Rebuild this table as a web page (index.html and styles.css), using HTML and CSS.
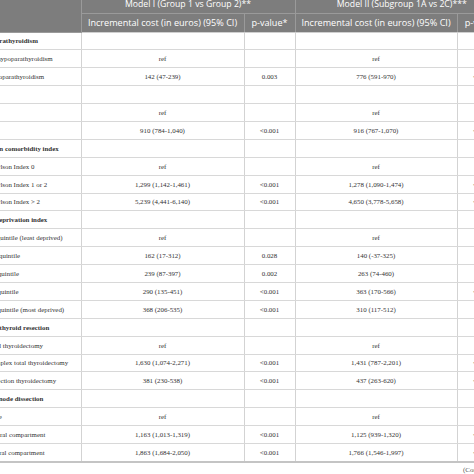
FILE: index.html
```html
<!DOCTYPE html>
<html>
<head>
<meta charset="utf-8">
<link rel="stylesheet" href="styles.css">
</head>
<body>
<div class="viewport">
  <table class="cost">
    <colgroup>
      <col class="c-label">
      <col class="c-cost">
      <col class="c-p">
      <col class="c-cost2">
      <col class="c-p">
    </colgroup>
    <thead>
      <tr class="h1">
        <th rowspan="2"></th>
        <th colspan="2">Model I (Group 1 vs Group 2)**</th>
        <th colspan="2">Model II (Subgroup 1A vs 2C)***</th>
      </tr>
      <tr class="h2">
        <th>Incremental cost (in euros) (95% CI)</th>
        <th>p-value*</th>
        <th>Incremental cost (in euros) (95% CI)</th>
        <th>p-value*</th>
      </tr>
    </thead>
    <tbody>
      <tr class="grp"><td>Hypoparathyroidism</td><td></td><td></td><td></td><td></td></tr>
      <tr><td>No hypoparathyroidism</td><td>ref</td><td></td><td>ref</td><td></td></tr>
      <tr><td>Hypoparathyroidism</td><td>142 (47-239)</td><td>0.003</td><td>776 (591-970)</td><td>&lt;0.001</td></tr>
      <tr class="grp"><td>Sex</td><td></td><td></td><td></td><td></td></tr>
      <tr><td>Mr</td><td>ref</td><td></td><td>ref</td><td></td></tr>
      <tr><td>Ms</td><td>910 (784-1,040)</td><td>&lt;0.001</td><td>916 (767-1,070)</td><td>&lt;0.001</td></tr>
      <tr class="grp"><td>Charlson comorbidity index</td><td></td><td></td><td></td><td></td></tr>
      <tr><td>Charlson Index 0</td><td>ref</td><td></td><td>ref</td><td></td></tr>
      <tr><td>Charlson Index 1 or 2</td><td>1,299 (1,142-1,461)</td><td>&lt;0.001</td><td>1,278 (1,090-1,474)</td><td>&lt;0.001</td></tr>
      <tr><td>Charlson Index &gt; 2</td><td>5,239 (4,441-6,140)</td><td>&lt;0.001</td><td>4,650 (3,778-5,658)</td><td>&lt;0.001</td></tr>
      <tr class="grp"><td>Social deprivation index</td><td></td><td></td><td></td><td></td></tr>
      <tr><td>1st quintile (least deprived)</td><td>ref</td><td></td><td>ref</td><td></td></tr>
      <tr><td>2nd quintile</td><td>162 (17-312)</td><td>0.028</td><td>140 (-37-325)</td><td>0.069</td></tr>
      <tr><td>3rd quintile</td><td>239 (87-397)</td><td>0.002</td><td>263 (74-460)</td><td>0.007</td></tr>
      <tr><td>4th quintile</td><td>290 (135-451)</td><td>&lt;0.001</td><td>363 (170-566)</td><td>&lt;0.001</td></tr>
      <tr><td>5th quintile (most deprived)</td><td>368 (206-535)</td><td>&lt;0.001</td><td>310 (117-512)</td><td>0.001</td></tr>
      <tr class="grp"><td>Type of thyroid resection</td><td></td><td></td><td></td><td></td></tr>
      <tr><td>Total thyroidectomy</td><td>ref</td><td></td><td>ref</td><td></td></tr>
      <tr><td>Complex total thyroidectomy</td><td>1,630 (1,074-2,271)</td><td>&lt;0.001</td><td>1,431 (787-2,201)</td><td>&lt;0.001</td></tr>
      <tr><td>Resection thyroidectomy</td><td>381 (230-538)</td><td>&lt;0.001</td><td>437 (263-620)</td><td>&lt;0.001</td></tr>
      <tr class="grp"><td>Lymph node dissection</td><td></td><td></td><td></td><td></td></tr>
      <tr><td>None</td><td>ref</td><td></td><td>ref</td><td></td></tr>
      <tr><td>Central compartment</td><td>1,163 (1,013-1,319)</td><td>&lt;0.001</td><td>1,125 (939-1,320)</td><td>&lt;0.001</td></tr>
      <tr><td>Lateral compartment</td><td>1,863 (1,684-2,050)</td><td>&lt;0.001</td><td>1,766 (1,546-1,997)</td><td>&lt;0.001</td></tr>
    </tbody>
  </table>
  <div class="cont">(Continued)</div>
</div>
</body>
</html>
```

FILE: styles.css
```css
html, body {
  margin: 0;
  padding: 0;
  background: #ffffff;
  overflow: hidden;
}
.viewport {
  width: 474px;
  height: 474px;
  overflow: hidden;
}
.cost {
  border-collapse: collapse;
  table-layout: fixed;
  width: 548px;
  margin-left: -40px;
  margin-top: -5px;
  font-family: "Liberation Serif", "DejaVu Serif", serif;
  font-size: 6.9px;
  color: #333333;
}
.c-label { width: 121px; }
.c-cost { width: 163px; }
.c-p { width: 51px; }
.c-cost2 { width: 162px; }
.cost th {
  background: #7d7d7d;
  color: #ffffff;
  font-family: "Open Sans", "Liberation Sans", sans-serif;
  font-weight: normal;
  font-size: 9.1px;
  text-align: center;
  padding: 0;
  border-left: 1px solid #9a9a9a;
  border-bottom: 1px solid #9a9a9a;
  white-space: nowrap;
}
.cost tr.h1 th { height: 17.5px; font-size: 8.7px; }
.cost tr.h2 th { height: 18px; border-bottom: 1px solid #cfcfcf; }
.cost tr.h1 th:first-child { border-left: none; }
.cost td {
  height: 16.9px;
  padding: 0;
  text-align: center;
  vertical-align: middle;
  border-bottom: 1px solid #d8d8d8;
  border-left: 1px solid #d3d3d3;
  white-space: nowrap;
}
.cost td:first-child {
  text-align: left;
  padding-left: 27px;
  border-left: none;
  overflow: hidden;
}
.cost tr.grp td:first-child {
  font-weight: bold;
  padding-left: 16px;
}
.cost tbody tr:last-child td {
  border-bottom: 2px solid #c4c4c4;
}
.cont {
  width: 474px;
  padding-left: 463px;
  box-sizing: border-box;
  white-space: nowrap;
  margin-top: 3px;
  font-family: "Liberation Serif", "DejaVu Serif", serif;
  font-size: 7px;
  color: #555555;
}
```
